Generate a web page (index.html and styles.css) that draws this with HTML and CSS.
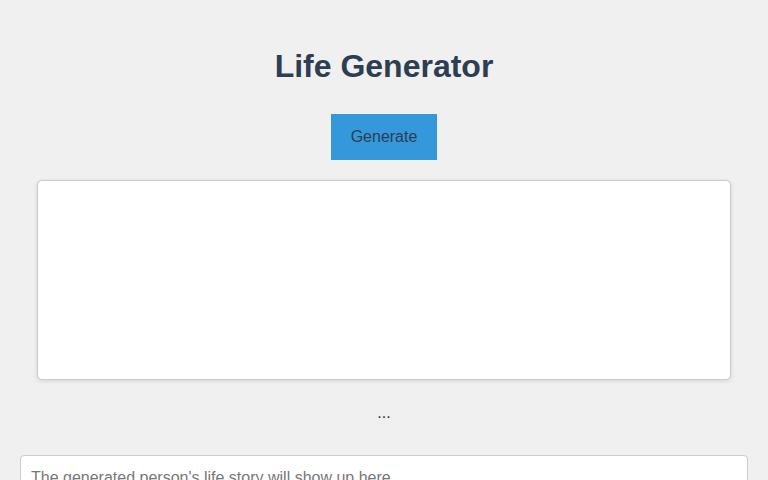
FILE: index.html
```html
<!DOCTYPE html>
<html lang="en">
<head>
    <meta charset="UTF-8">
    <meta name="viewport" content="width=device-width, initial-scale=1.0">
    <title>Life Generator</title>
    <link rel="stylesheet" href="styles.css">
</head>
<body>
    <h1>Life Generator</h1>
    <button class="button" id="generateBtn">Generate</button>
    <div class="output" id="output"></div>
    <p class="status" id="status">...</p>
    <textarea class="story" id="story" placeholder="The generated person's life story will show up here"></textarea>
</body>
</html>
```

FILE: styles.css
```css
body {
    font-family: "Liberation Sans", Arial, sans-serif;
    background-color: #f0f0f0;
    margin: 0;
    padding: 20px;
    display: flex;
    flex-direction: column;
    align-items: center;
    color: #333;
}
h1 {
    color: #2c3e50;
    font-size: 32px;
    margin: 28px 0 29px;
}
.button {
    background-color: #3498db;
    color: #2c3e50;
    font-family: inherit;
    font-size: 16px;
    padding: 14px 20px;
    border: none;
    cursor: pointer;
    margin: 0;
}
.button:hover {
    background-color: #2980b9;
}
.output {
    width: 95%;
    height: 198px;
    margin-top: 20px;
    background-color: white;
    border: 1px solid #ccc;
    border-radius: 5px;
    box-shadow: 0 1px 4px rgba(0, 0, 0, 0.12);
}
.status {
    font-size: 16px;
    margin: 24px 0 0;
    line-height: 18px;
}
.story {
    align-self: stretch;
    margin-top: 33px;
    height: 120px;
    padding: 13px 10px;
    font-family: inherit;
    font-size: 16px;
    border: 1px solid #ccc;
    border-radius: 4px;
    box-sizing: border-box;
    resize: none;
}
.story::placeholder {
    color: #777;
}
```
